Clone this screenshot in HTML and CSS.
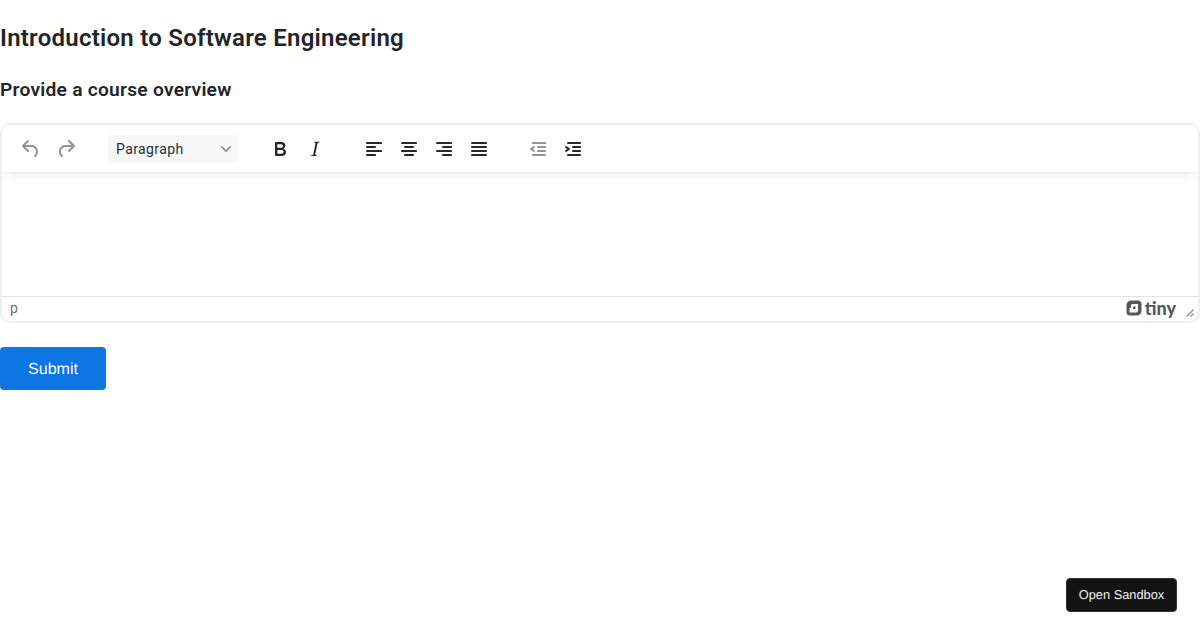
FILE: index.html
```html
<!DOCTYPE html>
<html lang="en">

<head>
    <meta charset="UTF-8">
    <title>Introduction to Software Engineering</title>
    <link rel="stylesheet" href="styles.css">
</head>

<body>
    <h1>Introduction to Software Engineering</h1>
    <h2>Provide a course overview</h2>

    <div class="editor">
        <div class="toolbar">
            <div class="tool-group group-history">
                <button class="tool disabled"><svg viewBox="0 0 24 24"><path d="M6.4 8H12c3.7 0 6.2 2 6.8 5.1.6 2.7-.4 5.6-2.3 6.8a1 1 0 0 1-1-1.8c1.1-.6 1.8-2.7 1.4-4.6-.5-2.1-2.1-3.5-4.9-3.5H6.4l3.3 3.3a1 1 0 1 1-1.4 1.4l-5-5a1 1 0 0 1 0-1.4l5-5a1 1 0 0 1 1.4 1.4L6.4 8Z"/></svg></button>
                <button class="tool disabled"><svg viewBox="0 0 24 24"><path d="M17.6 10H12c-2.8 0-4.4 1.4-4.9 3.5-.4 2 .3 4 1.4 4.6a1 1 0 1 1-1 1.8c-2-1.2-2.9-4.1-2.3-6.8.6-3 3-5.1 6.8-5.1h5.6l-3.3-3.3a1 1 0 1 1 1.4-1.4l5 5a1 1 0 0 1 0 1.4l-5 5a1 1 0 0 1-1.4-1.4l3.3-3.3Z"/></svg></button>
            </div>
            <div class="block-select">
                <span>Paragraph</span>
                <svg viewBox="0 0 10 10"><path d="M8.7 2.2c.3-.3.8-.3 1 0 .4.4.4.9 0 1.2L5.7 7.8c-.3.3-.9.3-1.2 0L.2 3.4a.8.8 0 0 1 0-1.2c.3-.3.8-.3 1.1 0L5 6l3.7-3.8Z"/></svg>
            </div>
            <div class="tool-group group-format">
                <button class="tool"><svg viewBox="0 0 24 24"><path d="M7.8 19c-.3 0-.5 0-.6-.2l-.2-.5V5.700c0-.2 0-.4.2-.5l.6-.2h5c1.500 0 2.700.3 3.500 1 .7.6 1.100 1.400 1.100 2.500a3 3 0 0 1-.6 1.900c-.4.6-1 1-1.600 1.200.4.1.9.3 1.300.6s.8.7 1 1.200c.4.4.5 1 .5 1.600 0 1.300-.4 2.300-1.300 3-.8.7-2.100 1-3.800 1H7.800Zm5-8.300c.6 0 1.200-.1 1.600-.5.4-.3.6-.7.6-1.300 0-1.100-.8-1.700-2.300-1.700H9.300v3.500h3.400Zm.5 6c.7 0 1.300-.1 1.700-.4.4-.4.6-.9.6-1.500s-.2-1-.7-1.400c-.4-.3-1-.4-2-.4H9.400v3.800h4Z"/></svg></button>
                <button class="tool"><svg viewBox="0 0 24 24"><path d="M16.7 4.700l-.1.900h-.3c-.6 0-1 0-1.400.3-.3.3-.4.6-.5 1.100l-2.100 9.800v.6c0 .5.4.8 1.400.8h.2l-.2.8H8l.2-.8h.2c1.100 0 1.800-.5 2-1.500l2-9.800.1-.5c0-.6-.4-.8-1.400-.8h-.3l.2-.9h5.800Z"/></svg></button>
            </div>
            <div class="tool-group group-align">
                <button class="tool"><svg viewBox="0 0 24 24"><path d="M5 5h14c.6 0 1 .4 1 1s-.4 1-1 1H5a1 1 0 1 1 0-2Zm0 4h8c.6 0 1 .4 1 1s-.4 1-1 1H5a1 1 0 1 1 0-2Zm0 8h8c.6 0 1 .4 1 1s-.4 1-1 1H5a1 1 0 0 1 0-2Zm0-4h14c.6 0 1 .4 1 1s-.4 1-1 1H5a1 1 0 0 1 0-2Z"/></svg></button>
                <button class="tool"><svg viewBox="0 0 24 24"><path d="M5 5h14c.6 0 1 .4 1 1s-.4 1-1 1H5a1 1 0 1 1 0-2Zm3 4h8c.6 0 1 .4 1 1s-.4 1-1 1H8a1 1 0 1 1 0-2Zm0 8h8c.6 0 1 .4 1 1s-.4 1-1 1H8a1 1 0 0 1 0-2Zm-3-4h14c.6 0 1 .4 1 1s-.4 1-1 1H5a1 1 0 0 1 0-2Z"/></svg></button>
                <button class="tool"><svg viewBox="0 0 24 24"><path d="M5 5h14c.6 0 1 .4 1 1s-.4 1-1 1H5a1 1 0 1 1 0-2Zm6 4h8c.6 0 1 .4 1 1s-.4 1-1 1h-8a1 1 0 0 1 0-2Zm0 8h8c.6 0 1 .4 1 1s-.4 1-1 1h-8a1 1 0 0 1 0-2Zm-6-4h14c.6 0 1 .4 1 1s-.4 1-1 1H5a1 1 0 0 1 0-2Z"/></svg></button>
                <button class="tool"><svg viewBox="0 0 24 24"><path d="M5 5h14c.6 0 1 .4 1 1s-.4 1-1 1H5a1 1 0 1 1 0-2Zm0 4h14c.6 0 1 .4 1 1s-.4 1-1 1H5a1 1 0 1 1 0-2Zm0 4h14c.6 0 1 .4 1 1s-.4 1-1 1H5a1 1 0 0 1 0-2Zm0 4h14c.6 0 1 .4 1 1s-.4 1-1 1H5a1 1 0 0 1 0-2Z"/></svg></button>
            </div>
            <div class="tool-group group-indent">
                <button class="tool disabled"><svg viewBox="0 0 24 24"><path d="M7 5h12c.6 0 1 .4 1 1s-.4 1-1 1H7a1 1 0 1 1 0-2Zm5 4h7c.6 0 1 .4 1 1s-.4 1-1 1h-7a1 1 0 0 1 0-2Zm0 4h7c.6 0 1 .4 1 1s-.4 1-1 1h-7a1 1 0 0 1 0-2Zm-5 4h12a1 1 0 0 1 0 2H7a1 1 0 0 1 0-2Zm1.600-3.800a1 1 0 0 1-1.200 1.600l-3-2a1 1 0 0 1 0-1.600l3-2a1 1 0 0 1 1.200 1.600L6.800 12l1.800 1.200Z"/></svg></button>
                <button class="tool"><svg viewBox="0 0 24 24"><path d="M7 5h12c.6 0 1 .4 1 1s-.4 1-1 1H7a1 1 0 1 1 0-2Zm5 4h7c.6 0 1 .4 1 1s-.4 1-1 1h-7a1 1 0 0 1 0-2Zm0 4h7c.6 0 1 .4 1 1s-.4 1-1 1h-7a1 1 0 0 1 0-2Zm-5 4h12a1 1 0 0 1 0 2H7a1 1 0 0 1 0-2Zm-2.600-3.800L6.200 12l-1.800-1.200a1 1 0 0 1 1.200-1.600l3 2a1 1 0 0 1 0 1.600l-3 2a1 1 0 1 1-1.200-1.600Z"/></svg></button>
            </div>
        </div>
        <div class="edit-area"></div>
        <div class="statusbar">
            <span class="path">p</span>
            <span class="brand">
                <svg class="brand-mark" viewBox="0 0 16 16"><path fill-rule="evenodd" d="M5 .5h7A3.500 3.500 0 0 1 15.500 4v7a4.500 4.500 0 0 1-4.500 4.500H4A3.500 3.500 0 0 1 .5 12V5A4.500 4.500 0 0 1 5 .5Zm1.500 3.500A1.500 1.500 0 0 0 5 5.500V8H3.500v4.500H10a2 2 0 0 0 2-2V4H6.500ZM8 6.500h1.500V9H7V7.500a1 1 0 0 1 1-1Z"/></svg>
                <span class="brand-name">tiny</span>
            </span>
            <svg class="resize" viewBox="0 0 10 10"><path d="M8.100 1.100 9 2 2 9l-.9-.9 7-7Zm0 4 .9.900L6 9l-.9-.9 3-3Z"/></svg>
        </div>
    </div>

    <button class="submit">Submit</button>
    <button class="sandbox">Open Sandbox</button>
</body>

</html>
```

FILE: styles.css
```css
body {
    margin: 0;
    font-family: Roboto, Arial, sans-serif;
    color: #212529;
    background-color: #fff;
}

h1 {
    margin: 0;
    padding-top: 23px;
    font-size: 24px;
    line-height: 30px;
    font-weight: 600;
    letter-spacing: 0.25px;
}

h2 {
    margin: 0;
    padding-top: 22px;
    font-size: 19.2px;
    line-height: 30px;
    font-weight: 600;
    letter-spacing: 0.25px;
}

.editor {
    margin-top: 18px;
    height: 200px;
    box-sizing: border-box;
    width: 1200px;
    border: 2px solid #eee;
    border-radius: 10px;
    display: flex;
    flex-direction: column;
    overflow: hidden;
}

.toolbar {
    height: 47px;
    box-sizing: border-box;
    flex: none;
    display: flex;
    align-items: center;
    padding: 1px 0 0 15px;
    box-shadow: 0 2px 2px -2px rgba(34, 47, 62, 0.1), 0 8px 8px -4px rgba(34, 47, 62, 0.07);
    background-color: #fff;
}

.tool-group {
    display: flex;
}

.tool {
    width: 35px;
    height: 28px;
    padding: 0;
    border: none;
    background: none;
    display: flex;
    align-items: center;
    justify-content: center;
    fill: #23282f;
}

.tool svg {
    width: 24px;
    height: 24px;
}

.disabled {
    fill: rgba(34, 40, 47, 0.5);
}

.group-history {
    margin-left: -4px;
}

.block-select {
    width: 130px;
    height: 28px;
    margin-left: 25px;
    box-sizing: border-box;
    padding: 0 8px;
    background-color: #f7f7f7;
    border-radius: 3px;
    display: flex;
    align-items: center;
    justify-content: space-between;
    font-size: 14px;
    letter-spacing: 0.4px;
    color: #222f3e;
}

.block-select svg {
    width: 10px;
    height: 10px;
    margin-right: -1px;
    fill: rgba(34, 40, 47, 0.5);
}

.group-format {
    margin-left: 24px;
}

.group-align {
    margin-left: 24px;
}

.group-indent {
    margin-left: 24px;
}

.edit-area {
    flex: 1;
}

.statusbar {
    height: 25px;
    flex: none;
    box-sizing: border-box;
    border-top: 1px solid #e3e3e3;
    display: flex;
    align-items: center;
    padding: 0 3px 2px 8px;
    font-size: 14px;
    color: #6a6f75;
}

.path {
    flex: 1;
}

.brand {
    display: flex;
    align-items: center;
    gap: 3px;
    color: #54585e;
    fill: #54585e;
    margin-right: 9px;
}

.brand-mark {
    width: 16px;
    height: 16px;
}

.brand-name {
    font-family: Lato, sans-serif;
    font-weight: 900;
    font-size: 18px;
    line-height: 20px;
}

.resize {
    width: 10px;
    height: 10px;
    fill: #8a8f95;
    margin-top: 9px;
}

.submit {
    display: block;
    margin-top: 24px;
    width: 106px;
    height: 43px;
    padding: 2px 0 0;
    border: none;
    border-radius: 4px;
    background-color: #0d76e0;
    color: #fff;
    font-family: "Liberation Sans", Arial, sans-serif;
    font-size: 16px;
    text-rendering: geometricPrecision;
}

/* flota sobre la pagina */
.sandbox {
    position: absolute;
    right: 23px;
    bottom: 18px;
    width: 111px;
    height: 34px;
    padding: 0 0 2px;
    border: 1px solid #333;
    border-radius: 4px;
    background-color: #131313;
    color: #f5f5f5;
    font-family: "Liberation Sans", Arial, sans-serif;
    font-size: 12.8px;
    text-rendering: geometricPrecision;
}
```
